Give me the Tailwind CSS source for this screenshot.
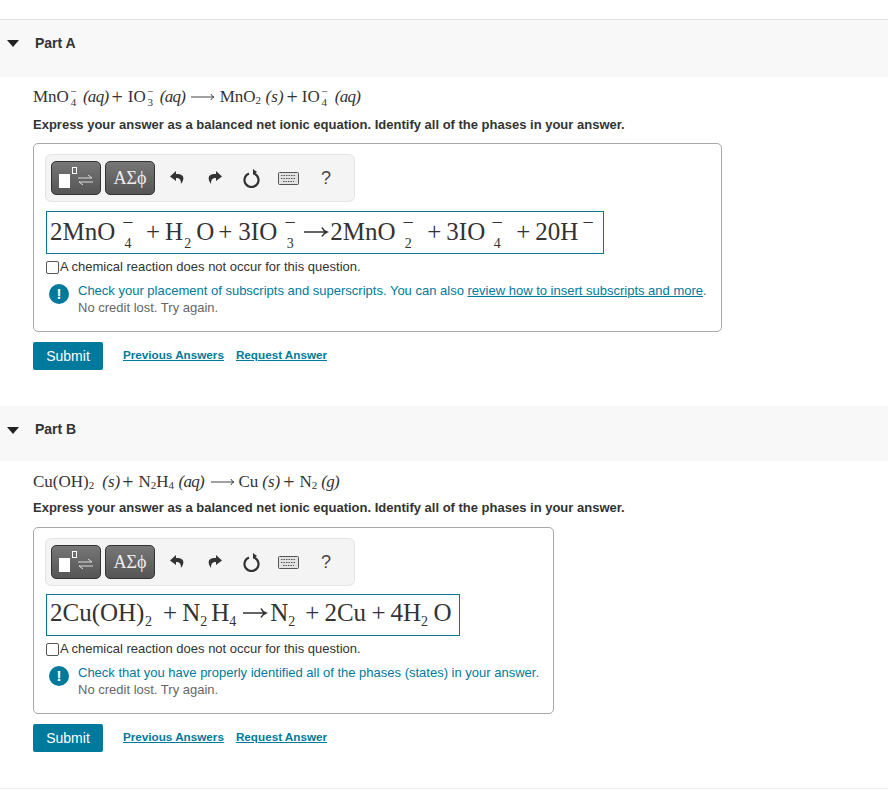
<!DOCTYPE html>
<html lang="en">
<head>
<meta charset="UTF-8">
<title>Parts</title>
<script src="https://cdn.jsdelivr.net/npm/@tailwindcss/browser@4"></script>
</head>
<body class="bg-white font-['Liberation_Sans',sans-serif] text-[#333]">
<div class="w-[888px] h-[790px] overflow-hidden pt-[19px]">

  <!-- Part A -->
  <section class="border-t border-[#e2e2e2]">
    <div class="h-[57px] bg-[#f8f8f8] flex items-start pt-[15px]">
      <span class="ml-[7px] mt-[5px] w-0 h-0 border-x-[6px] border-x-transparent border-t-[7px] border-t-[#222]"></span>
      <h2 class="ml-[16px] text-[14px] leading-[16px] font-bold">Part A</h2>
    </div>
    <div class="pl-[33px]">
      <p class="mt-[9px] h-[22px] flex items-center font-['Liberation_Serif',serif] text-[17px] leading-[22px] whitespace-nowrap">
        <span>MnO</span><span class="inline-flex flex-col items-center text-[11px] leading-[11px] w-[9px]"><span>&minus;</span><span>4</span></span>
        <span class="ml-[5px] italic tracking-[-0.7px]">(aq)</span><span class="ml-[3px] text-[20px]">+</span><span class="ml-[5px]">IO</span><span class="inline-flex flex-col items-center text-[11px] leading-[11px] w-[9px]"><span>&minus;</span><span>3</span></span>
        <span class="ml-[5px] italic tracking-[-0.7px]">(aq)</span>
        <svg class="ml-[5.500px]" width="24" height="10" viewBox="0 0 24 10" fill="none" stroke="#444"><path d="M0 5h23M20 2c.5 1.500 1.500 2.500 3 3-1.500.5-2.500 1.500-3 3"/></svg>
        <span class="ml-[5px]">MnO</span><sub class="text-[11px]">2</sub>
        <span class="ml-[4.500px] italic">(s)</span><span class="ml-[3px] text-[20px]">+</span><span class="ml-[4px]">IO</span><span class="inline-flex flex-col items-center text-[11px] leading-[11px] w-[9px]"><span>&minus;</span><span>4</span></span>
        <span class="ml-[6px] italic tracking-[-0.7px]">(aq)</span>
      </p>
      <p class="mt-[9px] text-[13px] leading-[16px] font-bold">Express your answer as a balanced net ionic equation. Identify all of the phases in your answer.</p>

      <div class="mt-[10px] w-[689px] h-[189px] border border-[#a9a9a9] rounded-[5px] pl-[11px] pt-[10px]">
        <div class="w-[310px] h-[48px] bg-[#f4f4f4] border border-[#e4e4e4] rounded-[6px] flex items-center pl-[5px]">
          <button class="w-[50px] h-[34px] rounded-[5px] border border-[#333] bg-gradient-to-b from-[#777] to-[#555] relative">
            <span class="absolute left-[7px] top-[12px] w-[11px] h-[14px] bg-white"></span>
            <span class="absolute left-[20px] top-[5px] w-[5px] h-[7px] border border-white"></span>
            <svg class="absolute left-[26px] top-[13px]" width="15" height="10" viewBox="0 0 15 10" fill="none" stroke="#ddd"><path d="M0 3h14M10 0l4 3M15 7H1M5 10L1 7"/></svg>
          </button>
          <button class="ml-[4px] w-[50px] h-[34px] rounded-[5px] border border-[#333] bg-gradient-to-b from-[#777] to-[#555] text-[#eee] font-['Liberation_Serif',serif] text-[18px]">A&Sigma;&#981;</button>
          <svg class="ml-[15px]" width="14" height="16" viewBox="0 0 14 16" fill="#333"><path d="M6 1L0 6.500 6 11V8c3.500 0 5 1.500 5 6 2-3 3-5 2-7.500C12 4.500 9.500 4 6 4z"/></svg>
          <svg class="ml-[24px]" width="14" height="16" viewBox="0 0 14 16" fill="#333"><path d="M8 1l6 5.500L8 11V8c-3.500 0-5 1.500-5 6-2-3-3-5-2-7.500C2 4.500 4.500 4 8 4z"/></svg>
          <svg class="ml-[21px]" width="18" height="20" viewBox="0 0 18 20" fill="none" stroke="#333" stroke-width="2.200"><path d="M6 5.500a7 7 0 1 0 5 0"/><path d="M10 1v6l4-3z" fill="#333" stroke="none"/></svg>
          <svg class="ml-[17px]" width="21" height="13" viewBox="0 0 21 13" fill="#e2e2e2" stroke="#555"><rect x=".5" y=".5" width="20" height="12" rx="1"/><path d="M3 3.500h15M3 6.500h15M5 9.500h11" stroke-dasharray="1.500 1"/></svg>
          <span class="ml-[22px] text-[18px] text-[#444]">?</span>
        </div>
        <div class="mt-[9px] ml-px w-[558px] h-[43px] border border-[#0e7490] flex items-center pl-[3px] pb-[2px] font-['Liberation_Serif',serif] text-[25px] whitespace-nowrap">
          <span>2MnO</span><span class="ml-[8.700px] flex flex-col items-center w-[8px] text-[14px] leading-[22px] pt-[2px]"><span class="text-[20px]">&minus;</span><span>4</span></span>
          <span class="ml-[14px]">+</span><span class="ml-[5px]">H</span><span class="ml-[1px] w-[8px] text-[14px] leading-[23px] mt-[24px]">2</span><span class="ml-[4px]">O</span><span class="ml-[4px]">+</span><span class="ml-[6px]">3IO</span><span class="ml-[9px] flex flex-col items-center w-[8px] text-[14px] leading-[22px] pt-[2px]"><span class="text-[20px]">&minus;</span><span>3</span></span>
          <svg class="ml-[10px]" width="25" height="14" viewBox="0 0 25 14" fill="none" stroke="#333" stroke-width="1.600"><path d="M0 7h23M18 2.500c.8 2 2.500 3.500 5 4.500-2.500 1-4.200 2.500-5 4.500"/></svg>
          <span class="ml-[1px]">2MnO</span><span class="ml-[8.700px] flex flex-col items-center w-[8px] text-[14px] leading-[22px] pt-[2px]"><span class="text-[20px]">&minus;</span><span>2</span></span>
          <span class="ml-[15px]">+</span><span class="ml-[5px]">3IO</span><span class="ml-[8px] flex flex-col items-center w-[8px] text-[14px] leading-[22px] pt-[2px]"><span class="text-[20px]">&minus;</span><span>4</span></span>
          <span class="ml-[15px]">+</span><span class="ml-[5px]">20H</span><span class="ml-[4px] w-[8px] text-[20px] leading-[23px] mb-[18px]">&minus;</span>
        </div>
        <label class="mt-[5px] h-[16px] flex items-center text-[13px]">
          <span class="ml-px w-[13px] h-[13px] border border-[#555] rounded-[2px] bg-white"></span>
          <span class="ml-px">A chemical reaction does not occur for this question.</span>
        </label>
        <div class="mt-[7px] flex items-start">
          <span class="ml-[4px] mt-[2px] w-[20px] h-[20px] rounded-full bg-[#007a9c] text-white text-[15px] leading-[20px] text-center font-bold">!</span>
          <div class="ml-[9px] text-[13px] leading-[17px]">
            <p class="text-[#007a9c]">Check your placement of subscripts and superscripts. You can also <a class="underline">review how to insert subscripts and more</a><span class="text-[#555]">.</span></p>
            <p class="text-[#666]">No credit lost. Try again.</p>
          </div>
        </div>
      </div>

      <div class="mt-[10px] flex items-center h-[28px]">
        <button class="w-[70px] h-[28px] bg-[#007a9c] rounded-[2px] text-white text-[14px]">Submit</button>
        <a class="ml-[20px] mb-[3px] text-[11.700px] font-bold text-[#007a9c] underline">Previous Answers</a>
        <a class="ml-[12px] mb-[3px] text-[11.700px] font-bold text-[#007a9c] underline">Request Answer</a>
      </div>
    </div>
  </section>

  <!-- Part B -->
  <section class="mt-[36px]">
    <div class="h-[55px] bg-[#f8f8f8] flex items-start pt-[15px]">
      <span class="ml-[7px] mt-[6px] w-0 h-0 border-x-[6px] border-x-transparent border-t-[7px] border-t-[#222]"></span>
      <h2 class="ml-[16px] text-[14px] leading-[16px] font-bold">Part B</h2>
    </div>
    <div class="pl-[33px]">
      <p class="mt-[10px] h-[22px] flex items-center font-['Liberation_Serif',serif] text-[17px] leading-[22px] whitespace-nowrap">
        <span>Cu(OH)</span><sub class="text-[11px]">2</sub><span class="ml-[8px] italic">(s)</span><span class="ml-[2px] text-[20px]">+</span><span class="ml-[5px]">N</span><sub class="text-[11px]">2</sub><span>H</span><sub class="text-[11px]">4</sub><span class="ml-[4.500px] italic tracking-[-0.7px]">(aq)</span>
        <svg class="ml-[7px]" width="24" height="10" viewBox="0 0 24 10" fill="none" stroke="#444"><path d="M0 5h23M20 2c.5 1.500 1.500 2.500 3 3-1.500.5-2.500 1.500-3 3"/></svg>
        <span class="ml-[3.400px]">Cu</span><span class="ml-[4px] italic">(s)</span><span class="ml-[3px] text-[20px]">+</span><span class="ml-[5px]">N</span><sub class="text-[11px]">2</sub><span class="ml-[4px] italic tracking-[-0.7px]">(g)</span>
      </p>
      <p class="mt-[7px] text-[13px] leading-[16px] font-bold">Express your answer as a balanced net ionic equation. Identify all of the phases in your answer.</p>

      <div class="mt-[11px] w-[521px] h-[187px] border border-[#a9a9a9] rounded-[5px] pl-[11px] pt-[10px]">
        <div class="w-[310px] h-[48px] bg-[#f4f4f4] border border-[#e4e4e4] rounded-[6px] flex items-center pl-[5px]">
          <button class="w-[50px] h-[34px] rounded-[5px] border border-[#333] bg-gradient-to-b from-[#777] to-[#555] relative">
            <span class="absolute left-[7px] top-[12px] w-[11px] h-[14px] bg-white"></span>
            <span class="absolute left-[20px] top-[5px] w-[5px] h-[7px] border border-white"></span>
            <svg class="absolute left-[26px] top-[13px]" width="15" height="10" viewBox="0 0 15 10" fill="none" stroke="#ddd"><path d="M0 3h14M10 0l4 3M15 7H1M5 10L1 7"/></svg>
          </button>
          <button class="ml-[4px] w-[50px] h-[34px] rounded-[5px] border border-[#333] bg-gradient-to-b from-[#777] to-[#555] text-[#eee] font-['Liberation_Serif',serif] text-[18px]">A&Sigma;&#981;</button>
          <svg class="ml-[15px]" width="14" height="16" viewBox="0 0 14 16" fill="#333"><path d="M6 1L0 6.500 6 11V8c3.500 0 5 1.500 5 6 2-3 3-5 2-7.500C12 4.500 9.500 4 6 4z"/></svg>
          <svg class="ml-[24px]" width="14" height="16" viewBox="0 0 14 16" fill="#333"><path d="M8 1l6 5.500L8 11V8c-3.500 0-5 1.500-5 6-2-3-3-5-2-7.500C2 4.500 4.500 4 8 4z"/></svg>
          <svg class="ml-[21px]" width="18" height="20" viewBox="0 0 18 20" fill="none" stroke="#333" stroke-width="2.200"><path d="M6 5.500a7 7 0 1 0 5 0"/><path d="M10 1v6l4-3z" fill="#333" stroke="none"/></svg>
          <svg class="ml-[17px]" width="21" height="13" viewBox="0 0 21 13" fill="#e2e2e2" stroke="#555"><rect x=".5" y=".5" width="20" height="12" rx="1"/><path d="M3 3.500h15M3 6.500h15M5 9.500h11" stroke-dasharray="1.500 1"/></svg>
          <span class="ml-[22px] text-[18px] text-[#444]">?</span>
        </div>
        <div class="mt-[8px] ml-px w-[414px] h-[42px] border border-[#0e7490] flex items-center pl-[3px] pb-[4px] font-['Liberation_Serif',serif] text-[25px] whitespace-nowrap">
          <span>2Cu(OH)</span><span class="ml-[0.600px] w-[7px] text-[14px] leading-[20px] mt-[18px]">2</span><span class="ml-[11px]">+</span><span class="ml-[5px]">N</span><span class="w-[7px] text-[14px] leading-[20px] mt-[18px]">2</span><span class="ml-[4px]">H</span><span class="w-[7px] text-[14px] leading-[20px] mt-[18px]">4</span>
          <svg class="ml-[7px]" width="25" height="14" viewBox="0 0 25 14" fill="none" stroke="#333" stroke-width="1.600"><path d="M0 7h23M18 2.500c.8 2 2.500 3.500 5 4.500-2.500 1-4.200 2.500-5 4.500"/></svg>
          <span class="ml-[2px]">N</span><span class="w-[7px] text-[14px] leading-[20px] mt-[18px]">2</span><span class="ml-[10px]">+</span><span class="ml-[5px]">2Cu</span><span class="ml-[5.300px]">+</span><span class="ml-[5px]">4H</span><span class="w-[7px] text-[14px] leading-[20px] mt-[18px]">2</span><span class="ml-[5.500px]">O</span>
        </div>
        <label class="mt-[5px] h-[16px] flex items-center text-[13px]">
          <span class="ml-px w-[13px] h-[13px] border border-[#555] rounded-[2px] bg-white"></span>
          <span class="ml-px">A chemical reaction does not occur for this question.</span>
        </label>
        <div class="mt-[7px] flex items-start">
          <span class="ml-[4px] mt-[2px] w-[20px] h-[20px] rounded-full bg-[#007a9c] text-white text-[15px] leading-[20px] text-center font-bold">!</span>
          <div class="ml-[9px] text-[13px] leading-[17px]">
            <p class="text-[#007a9c]">Check that you have properly identified all of the phases (states) in your answer.</p>
            <p class="text-[#666]">No credit lost. Try again.</p>
          </div>
        </div>
      </div>

      <div class="mt-[10px] flex items-center h-[28px]">
        <button class="w-[70px] h-[28px] bg-[#007a9c] rounded-[2px] text-white text-[14px]">Submit</button>
        <a class="ml-[20px] mb-[3px] text-[11.700px] font-bold text-[#007a9c] underline">Previous Answers</a>
        <a class="ml-[12px] mb-[3px] text-[11.700px] font-bold text-[#007a9c] underline">Request Answer</a>
      </div>
    </div>
  </section>

  <div class="mt-[36px] border-t border-[#eee]"></div>
</div>
</body>
</html>
